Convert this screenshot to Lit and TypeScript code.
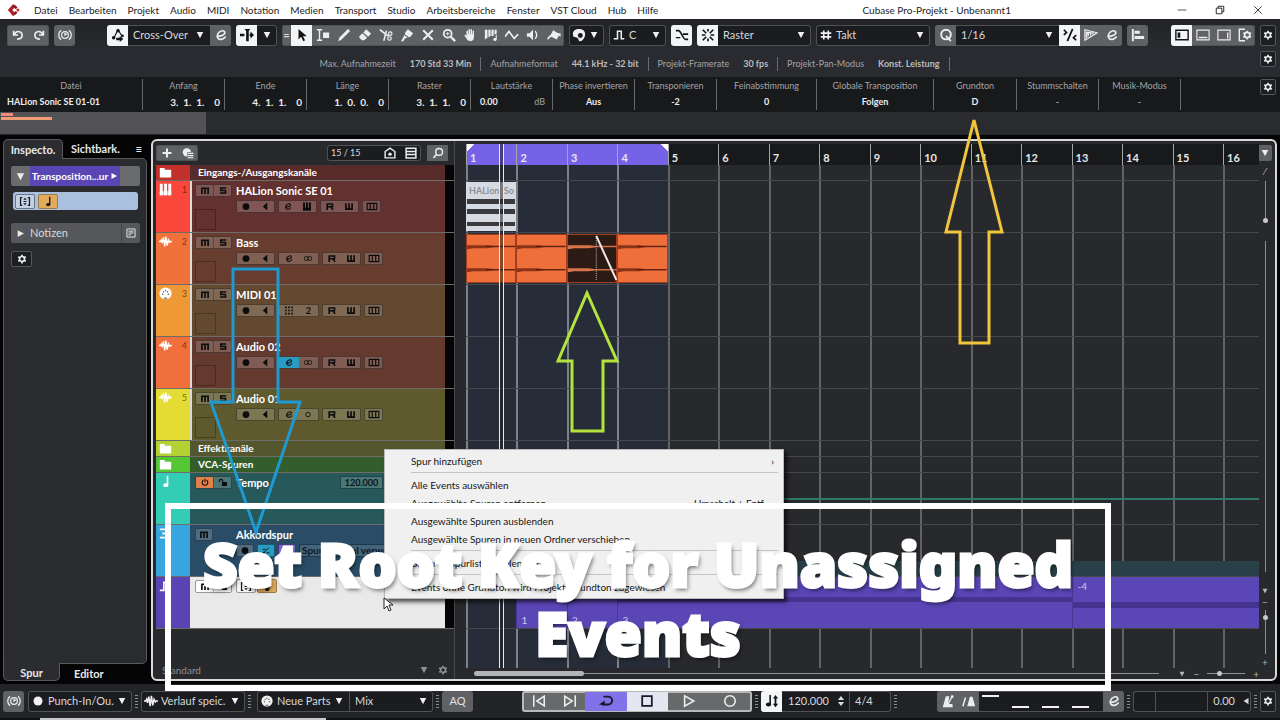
import { LitElement, html, svg, css, nothing } from "lit";
import { customElement, state } from "lit/decorators.js";
import { classMap } from "lit/directives/class-map.js";

const ICONS: Record<string, any> = {
  logo: svg`<path d="M7 1 1 8l6 7 3-3-4-4 4-4z" fill="#b3202c"/><path d="M9 2l3 3-2 2-3-3zM9 14l3-3-2-2-3 3z" fill="#8d1722"/><circle cx="12.500" cy="8" r="1.800" fill="#c8303a"/>`,
  undo: svg`<path d="M3 3v5h5M3.500 8C5 4.500 8 3.500 10.500 4.500c3 1.500 3 6 0 7.500-1 .6-2 .7-3.500.7" fill="none" stroke="currentColor" stroke-width="1.900"/>`,
  redo: svg`<path d="M13 3v5H8M12.500 8C11 4.500 8 3.500 5.500 4.500c-3 1.500-3 6 0 7.500 1 .6 2 .7 3.500.7" fill="none" stroke="currentColor" stroke-width="1.900"/>`,
  history: svg`<circle cx="8" cy="8" r="3.800" fill="none" stroke="currentColor" stroke-width="1.400"/><path d="M8 5.500V8l2-1.500M3.500 2.500a7 7 0 0 0 0 11M12.500 2.500a7 7 0 0 1 0 11" fill="none" stroke="currentColor" stroke-width="1.500"/>`,
  constrain: svg`<path d="M3 12 8 2l5 8" fill="none" stroke="currentColor" stroke-width="1.300"/><circle cx="8" cy="3" r="2"/><circle cx="3" cy="11" r="2"/><circle cx="13" cy="9" r="1.600"/><path d="M6 11h4V9l4 3.500L10 16v-2H6z"/>`,
  e: svg`<path d="M3.500 9.500C8 9.500 13 7.500 12.300 4.800 11.500 2 5.500 3 4 7.500c-1.200 4 1.500 6 4.500 5.500 2-.3 3.300-1.300 4.300-2.700" fill="none" stroke="currentColor" stroke-width="1.900" stroke-linecap="round"/>`,
  autoscroll: svg`<path d="M7 1h3v14H7zM0 6.500h5v3H0zM11 6.500h1V4l4 4-4 4V9.500h-1z"/><path d="M5 1h7L8.500 4.500z"/>`,
  pointer: svg`<path d="M4 1v12l3-3 2.500 5 2-1L9 9.500h4.500z"/>`,
  range: svg`<path d="M1 2h6M1 14h6M4 2v12" stroke="currentColor" stroke-width="1.600" fill="none"/><path d="M8 5h7v6.500H8z"/>`,
  pencil: svg`<path d="M12.500 1 15 3.500 5 13.500 1.500 15 2.500 11z"/>`,
  eraser: svg`<path d="M9.500 1.500 15 6.500 11.500 10 6 5zM5 6l5.500 5L7 14H4.500L1.500 11V9.500z"/>`,
  scissors: svg`<path d="M1 2 11 9.500M5.500 14.500 8.500 3" stroke="currentColor" stroke-width="1.800" fill="none"/><circle cx="12.800" cy="6.500" r="2" fill="none" stroke="currentColor" stroke-width="1.400"/><circle cx="12" cy="12" r="2" fill="none" stroke="currentColor" stroke-width="1.400"/>`,
  glue: svg`<path d="M9 1.500 15 6l-3 4-2 .5L5.500 7 6 5zM5 8l3.500 3-3 1L4 15H1l2-3z"/>`,
  x: svg`<path d="M2.500 2.500 13.500 13.500M13.500 2.500 2.500 13.500" stroke="currentColor" stroke-width="2.400"/>`,
  zoom: svg`<circle cx="6.500" cy="6.500" r="4.500" fill="none" stroke="currentColor" stroke-width="2"/><path d="m10 10 5 5" stroke="currentColor" stroke-width="2.600"/><path d="M4.500 6.500h4M6.500 4.500v4" stroke="currentColor" stroke-width="1"/>`,
  hand: svg`<path d="M4 8V3h1.700v4h.6V1.500H8V7h.6V1.500h1.700V7h.6V3h1.700v7c0 3-1.500 5-4 5-3 0-4-1.500-5-3.500L1.500 8.500C2.500 7 3.500 8.300 4 9z"/>`,
  warp: svg`<path d="M1 2h3v9l-3 2zM5 2h2.500v7L5 10.500zM8.500 2H11v7H8.500zM12 2h2.500v5H12z"/><path d="M14 8v5" stroke="currentColor" stroke-width="1.200"/><circle cx="12.500" cy="13" r="1.800"/>`,
  wave: svg`<path d="M0 10 4.500 4l6 8L15 7" fill="none" stroke="currentColor" stroke-width="1.900"/>`,
  speaker: svg`<path d="M1 6h3l4-4v12l-4-4H1z"/><path d="M10.500 3.500q3.500 4.500 0 9" fill="none" stroke="currentColor" stroke-width="1.600"/>`,
  bucket: svg`<path d="M7 2.500 14.500 7 11 13 3.500 9zM10 6h5.500v4z"/><path d="M1 13c1-3 3-4 5-4" fill="none" stroke="currentColor" stroke-width="1.800"/>`,
  palette: svg`<path d="M8 1c4 0 7 2 7 6s-3 8-6 8c-2 0-1-3-3-4S1 11 1 7s3-6 7-6z"/><circle cx="9.500" cy="8.500" r="2.800" fill="#1a1b1e"/>`,
  pulse: svg`<path d="M1 13h5V3h5v10h4" fill="none" stroke="currentColor" stroke-width="2"/>`,
  cross: svg`<path d="M1 3h3c3 0 5 10 8 10h3M9 7h6" fill="none" stroke="currentColor" stroke-width="1.900"/><path d="M1 11h5" stroke="currentColor" stroke-width="1.500"/>`,
  snap: svg`<path d="M2 2l4 4M14 2l-4 4M2 14l4-4M14 14l-4-4M8 1v3M8 12v3M1 8h4M15 8h-4" fill="none" stroke="currentColor" stroke-width="1.900"/>`,
  hash: svg`<path d="M5 2v12M11 2v12M1 5.500h14M1 10.500h14" stroke="currentColor" stroke-width="2.200"/>`,
  q: svg`<circle cx="8" cy="7.500" r="5.500" fill="none" stroke="currentColor" stroke-width="2.200"/><path d="m8 9 5.500 6" stroke="currentColor" stroke-width="2.200"/>`,
  iq: svg`<path d="M11 1 5 15" stroke="currentColor" stroke-width="2"/><path d="M1 2l3 3-3 3M15 8l-3 3 3 3" fill="none" stroke="currentColor" stroke-width="2"/>`,
  warpq: svg`<path d="M1 2v12l14-8.500z" fill="none" stroke="currentColor" stroke-width="1.300"/><path d="M2 4v8l2-1.500V6l1 4 1.500-5 1 5L9 5l1 3 1.500-3z"/>`,
  align: svg`<path d="M1 1h2.200v14H1zM4 3h6v3.500H4zM4 9h11v3.500H4z"/>`,
  zl: svg`<path d="M1 2.500h14v11H1z" fill="none" stroke="currentColor" stroke-width="1.600"/><path d="M3 5h3v6H3z"/>`,
  zb: svg`<path d="M1 2.500h14v11H1z" fill="none" stroke="currentColor" stroke-width="1.300"/><path d="M3 10h10v1.600H3z"/>`,
  zr: svg`<path d="M1 2.500h14v11H1z" fill="none" stroke="currentColor" stroke-width="1.300"/><path d="M11.500 5H13v7h-1.500z"/>`,
  zs: svg`<path d="M8 1.500H1.500v13H8" fill="none" stroke="currentColor" stroke-width="1.600"/><circle cx="10.500" cy="8" r="3" fill="none" stroke="currentColor" stroke-width="2"/><path d="M10.500 3v2M10.500 11v2M6 5.500l2 1M15 5.500l-2 1M6 10.500l2-1M15 10.500l-2-1" stroke="currentColor" stroke-width="1.700"/>`,
  gear: svg`<circle cx="8" cy="8" r="4" fill="none" stroke="currentColor" stroke-width="2.600"/><path d="M8 1v3M8 12v3M2 4.500l2.500 1.500M14 4.500 11.500 6M2 11.500 4.500 10M14 11.500 11.500 10" stroke="currentColor" stroke-width="2.700"/>`,
  down: svg`<path d="M1.500 2h13L8 14.500z"/>`,
  right: svg`<path d="M3 2v12l11-6z"/>`,
  left: svg`<path d="M12 3v10L4 8z"/>`,
  plus: svg`<path d="M8 2v12M2 8h12" stroke="currentColor" stroke-width="2.800"/>`,
  preset: svg`<circle cx="6.500" cy="7" r="5.500"/><path d="M7 8h9M7 11h9M7 14h9" stroke="#6b6c6f" stroke-width="3"/><path d="M7.500 8.500H15M7.500 11.500H15M7.500 14.300H15" stroke="currentColor" stroke-width="1.400"/>`,
  house: svg`<path d="M1.500 14.500V6L8 1.500 14.500 6v8.500z" fill="none" stroke="currentColor" stroke-width="1.900"/><circle cx="8" cy="9.500" r="2.300"/>`,
  list: svg`<path d="M1.500 1.500h13v13h-13zM1.500 6h13M1.500 10h13" fill="none" stroke="currentColor" stroke-width="2"/>`,
  search: svg`<circle cx="9.500" cy="6.500" r="4.500" fill="none" stroke="currentColor" stroke-width="1.900"/><path d="M6 10 2 14.500" stroke="currentColor" stroke-width="2.200"/>`,
  folder: svg`<path d="M1 2.500h6v2h8v9.500H1z"/>`,
  keys: svg`<path d="M1 1h3.500v14H1zM6.300 1h3.500v14H6.300zM11.500 1H15v14h-3.500z"/><path d="M1 10h14v5H1z"/><path d="M5.400 10v5M10.600 10v5" stroke="#000" stroke-opacity=".4" stroke-width=".8"/>`,
  audio: svg`<path d="M0 8h2l1-2 1 4 1.500-7L7 14 8.500 2 10 13l1.500-7L13 9l1-1h2" fill="none" stroke="currentColor" stroke-width="1.700"/>`,
  midi: svg`<circle cx="8" cy="8" r="7.500"/><path d="M4.500 9v.1M11.500 9v.1M5.500 5.800v.1M10.500 5.800v.1M8 4.300v.1" stroke="#333" stroke-opacity=".8" stroke-width="1.700" stroke-linecap="round"/><path d="M6 15h4v-2H6z" fill="#333" fill-opacity=".6"/>`,
  note: svg`<path d="M9.500 1h2v11h-2z"/><ellipse cx="8.300" cy="12.500" rx="3.200" ry="2.300"/>`,
  chord: svg`<path d="M1 3h12M4 8h10M1 13h13" stroke="currentColor" stroke-width="2.200"/>`,
  step: svg`<path d="M1 14h5V4h6M12 1v6" fill="none" stroke="currentColor" stroke-width="2"/>`,
  dot: svg`<circle cx="8" cy="8" r="6"/>`,
  spk: svg`<path d="M12 1v14L4 8z"/>`,
  m: svg`<path d="M2.500 14V4H13.500V14M8 4v10" fill="none" stroke="currentColor" stroke-width="3"/>`,
  s: svg`<path d="M13.500 3.500H4V8h8.500v4.500H2.500" fill="none" stroke="currentColor" stroke-width="2.800"/>`,
  r: svg`<path d="M3 14V3.500h9.500v5H4M9 8.500l4.500 5.500" fill="none" stroke="currentColor" stroke-width="2.800"/>`,
  w: svg`<path d="M2.500 2v10.500h11V2M8 2v10" fill="none" stroke="currentColor" stroke-width="3"/>`,
  stereo: svg`<circle cx="5" cy="8" r="3.700" fill="none" stroke="currentColor" stroke-width="1.400"/><circle cx="11" cy="8" r="3.700" fill="none" stroke="currentColor" stroke-width="1.400"/>`,
  mono: svg`<circle cx="8" cy="8" r="4" fill="none" stroke="currentColor" stroke-width="1.600"/>`,
  grid: svg`<path d="M1 1h3v3H1zM6.500 1h3v3h-3zM12 1h3v3h-3zM1 6.500h3v3H1zM6.500 6.500h3v3h-3zM12 6.500h3v3h-3zM1 12h3v3H1zM6.500 12h3v3h-3zM12 12h3v3h-3z"/>`,
  lanes: svg`<path d="M1 3.500h14v9H1zM5.500 4v8M10.500 4v8" fill="none" stroke="currentColor" stroke-width="1.700"/>`,
  power: svg`<path d="M5 4a5 5 0 1 0 6 0M8 1.500v6" fill="none" stroke="currentColor" stroke-width="1.900"/>`,
  lock: svg`<path d="M6 7h9v7H6z"/><path d="M1.500 7V5q0-2.500 3-2.500t3 2.500v3" fill="none" stroke="currentColor" stroke-width="1.900"/>`,
  bracket: svg`<path d="M4 2.500H1.500v11H4M12 2.500h2.500v11H12" fill="none" stroke="currentColor" stroke-width="1.800"/><path d="M8 2.500l2.500 3h-5zM8 13.500l2.500-3h-5zM6 7.300h4v1.400H6z"/>`,
  pad: svg`<path d="M1.500 1.500h13v13h-13zM4 5h8M4 8h8M4 11h4" fill="none" stroke="currentColor" stroke-width="1.500"/>`,
  chordtool: svg`<path d="M3 13 13 3M2 6h5M9 12h5" stroke="currentColor" stroke-width="1.600"/><circle cx="4" cy="12" r="2"/>`,
  prev: svg`<path d="M2 1.500v13M14 2.500v11L5.500 8z" fill="none" stroke="currentColor" stroke-width="1.800"/>`,
  next: svg`<path d="M14 1.500v13M2 2.500v11L10.500 8z" fill="none" stroke="currentColor" stroke-width="1.800"/>`,
  cycle: svg`<path d="M5 3h5.500a4.300 4.300 0 0 1 0 9H4" fill="none" stroke="currentColor" stroke-width="2.100"/><path d="M0 12l6.500-4.500V13z"/>`,
  stop: svg`<path d="M2.500 2.500h11v11h-11z" fill="none" stroke="currentColor" stroke-width="2"/>`,
  play: svg`<path d="M3 2v12l10.500-6z" fill="none" stroke="currentColor" stroke-width="1.800"/>`,
  rec: svg`<circle cx="8" cy="8" r="6" fill="none" stroke="currentColor" stroke-width="1.800"/>`,
  tempo: svg`<path d="M5 1h1.800v11H5zM12 1l3 4h-2v6h2l-3 4-3-4h2V5H9z"/><ellipse cx="4" cy="12" rx="3" ry="2.300"/>`,
  spin: svg`<path d="M8 0 13 6.500H3zM8 16l5-6.500H3z"/>`,
  metro: svg`<path d="M5.500 2.500h4l-1.500 9h5l.5 3.500H2z"/><path d="M8 12 13 2" stroke="currentColor" stroke-width="1.600"/><circle cx="12.800" cy="3" r="1.600"/>`,
  count: svg`<path d="M4 4 1 14" stroke="currentColor" stroke-width="1.700"/><path d="M9 3h3l3 11H6z"/>`,
  min: svg`<path d="M1 8h14" stroke="currentColor" stroke-width="1.200"/>`,
  max: svg`<path d="M2 5h9v9H2zM5 5V2h9v9h-3" fill="none" stroke="currentColor" stroke-width="1.500"/>`,
  close: svg`<path d="M2 2l12 12M14 2 2 14" stroke="currentColor" stroke-width="1.400"/>`,
};

const ico = (name: string, size = "") =>
  html`<svg class="i ${size}" viewBox="0 0 16 16" fill="currentColor" aria-hidden="true">${ICONS[name]}</svg>`;

const btn = (icon: string, label: string, cls = "") =>
  html`<button class="b ${cls}" aria-label=${label}>${ico(icon)}</button>`;

const combo = (text: string, label: string, cls = "") =>
  html`<label class="combo ${cls}"><select aria-label=${label}><option>${text}</option></select>${ico("down", "xs")}</label>`;

interface Track {
  id: string;
  name: string;
  icon: string;
  num?: string;
  kind: "folder" | "track" | "tempo" | "chord" | "transpose";
  extra?: string;
}

const TRACKS: Track[] = [
  { id: "io", name: "Eingangs-/Ausgangskanäle", icon: "folder", kind: "folder" },
  { id: "halion", name: "HALion Sonic SE 01", icon: "keys", num: "1", kind: "track", extra: "keys" },
  { id: "bass", name: "Bass", icon: "audio", num: "2", kind: "track", extra: "stereo" },
  { id: "midi", name: "MIDI 01", icon: "midi", num: "3", kind: "track", extra: "midi" },
  { id: "audio2", name: "Audio 02", icon: "audio", num: "4", kind: "track", extra: "stereo" },
  { id: "audio1", name: "Audio 01", icon: "audio", num: "5", kind: "track", extra: "mono" },
  { id: "fx", name: "Effektkanäle", icon: "folder", kind: "folder" },
  { id: "vca", name: "VCA-Spuren", icon: "folder", kind: "folder" },
  { id: "tempo", name: "Tempo", icon: "note", kind: "tempo" },
  { id: "chords", name: "Akkordspur", icon: "chord", kind: "chord" },
  { id: "transpose", name: "", icon: "step", kind: "transpose" },
];

const INFO: [string, string, string][] = [
  ["Datei", "HALion Sonic SE 01-01", "file"],
  ["Anfang", "3.  1.  1.    0", "time"],
  ["Ende", "4.  1.  1.    0", "time"],
  ["Länge", "1.  0.  0.    0", "time"],
  ["Raster", "3.  1.  1.    0", "time"],
  ["Lautstärke", "0.00", "vol"],
  ["Phase invertieren", "Aus", ""],
  ["Transponieren", "-2", ""],
  ["Feinabstimmung", "0", ""],
  ["Globale Transposition", "Folgen", ""],
  ["Grundton", "D", ""],
  ["Stummschalten", "-", "dim"],
  ["Musik-Modus", "-", "dim"],
];

const BARS = Array.from({ length: 16 }, (_, i) => i + 1);

@customElement("app-root")
export class AppRoot extends LitElement {
  @state() private selectedTool = "pointer";

  static styles = css`
    :host {
      display: flex;
      flex-direction: column;
      min-height: 100vh;
      position: relative;
      overflow: hidden;
      background: #050506;
      color: #d8d9db;
      font: 10px/14px Lato, "Open Sans", sans-serif;
    }
    * { box-sizing: border-box; }
    button, select, input {
      font: inherit;
      color: inherit;
      background: none;
      border: 0;
      padding: 0;
      margin: 0;
      border-radius: 0;
      min-width: 0;
    }
    a { color: inherit; text-decoration: none; }
    select { appearance: none; }
    .i { width: 14px; height: 14px; display: block; flex: none; }
    .i.xs { width: 8px; height: 8px; }
    .i.sm { width: 10px; height: 10px; }
    .i.md { width: 12px; height: 12px; }

    /* menu bar */
    .menubar {
      display: flex;
      align-items: center;
      height: 19px;
      background: #fff;
      color: #1c1c1c;
      padding: 0 15px 0 7px;
    }
    .menubar nav { display: flex; gap: 11px; margin-left: 13px; }
    .title { margin-left: auto; }
    .winctl { display: flex; gap: 24px; margin-left: 164px; }
    .winctl .i { width: 10px; height: 10px; }
    .menubar .winctl .b { width: 14px; height: 14px; color: #222; }

    /* generic toolbar pieces */
    .toolbar {
      display: flex;
      align-items: center;
      gap: 5px;
      height: 32px;
      padding: 0 4px 0 7px;
      background: linear-gradient(#222326, #2a2b30);
      font-size: 11px;
    }
    .grp {
      display: flex;
      height: 21px;
      border-radius: 3px;
      background: #1b1c1f;
      box-shadow: inset 0 0 0 1px #505155;
      overflow: hidden;
      flex: none;
    }
    .b {
      display: flex;
      align-items: center;
      justify-content: center;
      width: 21px;
      color: #eceded;
      flex: none;
    }
    .b.grey, .grp.grey { background: #606164; }
    .b.on { background: #f3f4f6; color: #121316; }
    .b.box {
      width: 16px;
      height: 16px;
      border: 1px solid #55565a;
      border-radius: 2px;
      background: #1d1e21;
    }
    .b.box .i { width: 10px; height: 10px; }
    .b.tall { height: 21px; }
    .b.rounded { border-radius: 3px; height: 21px; }
    .combo {
      display: grid;
      grid-template-columns: 1fr auto;
      align-items: center;
      padding: 0 6px 0 5px;
      flex: 1;
    }
    .lead + .combo { padding-left: 0; }
    .combo select { grid-area: 1 / 1 / 2 / 3; height: 100%; width: 100%; text-align: left; }
    .combo option { color: #000; }
    .combo .i { grid-area: 1 / 2; pointer-events: none; color: #f0f0f0; }
    .indent { margin-left: 27px; }
    .w-mode { width: 124px; }
    .w-auto { width: 41px; }
    .w-pal { width: 35px; }
    .w-curve { width: 57px; }
    .w-snap { width: 114px; }
    .w-quant { width: 187px; }
    .w-auto .combo { padding-left: 0; }
    .handle { width: 9px; display: grid; place-items: center; font-weight: 700; }
    .push { margin-left: auto; }

    .status {
      display: grid;
      grid-template-columns: 16px 1fr 16px;
      height: 26px;
      padding: 0 4px;
      background: #2a2b30;
      color: #a3a4a7;
      font-size: 9px;
    }
    .status ul {
      display: flex;
      justify-content: center;
      align-items: center;
      list-style: none;
      margin: 0;
      padding: 0 20px 0 0;
    }
    .status li { display: flex; gap: 14px; padding: 0 9px; border-right: 1px solid #6a6b6e; }
    .status strong { color: #bbbcbf; }

    .info {
      display: grid;
      grid-template-columns: 143px repeat(4, 82px) repeat(2, 82px) 82px 100px 117px 83px repeat(2, 82px) 1fr;
      height: 35px;
      background: #18191b;
      padding: 2px 4px 2px 0;
      font-size: 9px;
    }
    .cell {
      display: flex;
      flex-direction: column;
      align-items: center;
      gap: 2px;
      border-right: 1px solid #68696c;
      color: #a3a4a7;
    }
    .cell strong { color: #ececed; white-space: pre; }
    .cell.file strong { align-self: flex-start; padding-left: 7px; }
    .cell.time strong { align-self: flex-end; padding-right: 4px; font-size: 10px; }
    .cell .pair { display: flex; justify-content: space-between; align-self: stretch; padding: 0 7px 0 9px; }
    .cell.dim strong { color: #a0a0a3; }
    .info .b { justify-self: end; }

    .overview { height: 23px; background: #2a2b2f; border-bottom: 1px solid #232427; }
    .view { width: 206px; height: 22px; background: #525254; padding: 1px; }
    .mini-a { width: 12px; height: 3px; background: #f58a7c; }
    .mini-b { width: 51px; height: 3px; background: #f29c76; margin-top: 1px; }

    /* work area */
    .work { display: flex; flex: 1; gap: 4px; padding: 4px 3px 3px 3px; min-height: 0; }
    .inspector { width: 144px; display: flex; flex-direction: column; flex: none; font-size: 11px; font-weight: 700; }
    .tabs { display: flex; align-items: center; color: #e8e8e9; }
    .tabs button { height: 20px; }
    .tabs .sel { width: 60px; background: #2b2c30; border: 1px solid #58595c; z-index: 1; }
    .tabs.top .sel { border-bottom: 0; border-radius: 5px 5px 0 0; }
    .tabs.bottom button { height: 18px; padding-top: 3px; }
    .tabs.bottom .sel { border-top: 0; border-radius: 0 0 5px 5px; width: 57px; }
    .tabs .other { margin-left: 8px; }
    .tabs.bottom .other { margin-left: 14px; }
    .tabs .menu { margin-left: auto; margin-right: 5px; }
    .panel {
      flex: 1;
      background: #2a2b2f;
      border: 1px solid #58595c;
      border-radius: 0 5px 5px 0;
      margin: -1px 0;
      padding: 7px 6px 0 7px;
    }
    .sect { display: flex; align-items: center; height: 20px; border-radius: 2px; background: #6a6b6d; overflow: hidden; }
    .sect .b { width: 19px; }
    .sect .b .i { width: 9px; height: 9px; }
    .sect .name { background: #5a45b4; height: 100%; width: 90px; display: flex; align-items: center; justify-content: center; gap: 2px; font-size: 10px; color: #fff; }
    .notes { background: #56575a; margin-top: 13px; font-weight: 400; }
    .notes .end { margin-left: auto; border-left: 1px solid #444; height: 100%; }
    .notes .end .i { width: 10px; height: 10px; }
    .bluebar { display: flex; gap: 3px; align-items: center; height: 18px; margin: 6px 2px 0 2px; padding: 0 2px; border-radius: 3px; background: #a9c1de; }
    .chips { display: flex; gap: 1px; }
    .chip { width: 20px; height: 15px; border: 1px solid #6a7686; border-radius: 2px; background: #c3d1e4; color: #1a1a1a; display: grid; place-items: center; flex: none; }
    .chip .i { width: 12px; height: 11px; }
    .bright .chip { background: #f6f6f6; border-color: #999; height: 14px; }
    .chip.gold, .bright .chip.gold { background: #e2ab5a; border-color: #9c7b4a; }
    .panel > .b.box { width: 21px; margin-top: 8px; }

    .project {
      flex: 1;
      min-width: 0;
      display: flex;
      border: 2px solid #d8d9da;
      border-radius: 6px;
      background: #28292c;
      padding-left: 3px;
    }
    .tracklist { width: 299px; display: flex; flex-direction: column; border-right: 1px solid #48494c; flex: none; }
    .tl-head { display: flex; align-items: center; height: 24px; padding-right: 6px; gap: 6px; }
    .tl-head .grp { height: 16px; }
    .tl-head .b .i { width: 12px; height: 12px; }
    .tl-head .b { height: 16px; }
    .count { display: flex; align-items: center; width: 52px; padding-left: 4px; font-size: 9px; }
    .row { height: 16px; display: flex; background: #050506; border-bottom: 1px solid #6e6b68; overflow: hidden; }
    .row.full { height: 52px; }
    .color { width: 34px; flex: none; display: flex; justify-content: space-between; padding: 1px 3px 0 2px; color: #fff; font-size: 9px; background: var(--c); }
    .row.full .color { padding-top: 2px; }
    .color span { color: #0008; }
    .color .i { width: 15px; height: 13px; }
    .body { flex: 1; min-width: 0; margin-right: 9px; background: var(--d); display: flex; gap: 4px; padding: 2px 0 0 3px; color: #fff; font-weight: 700; border-left: 2px solid var(--d); }
    .num .body { border-left-color: #dcdad8; }
    .folder .body { padding: 0 0 0 6px; font-size: 10px; line-height: 15px; }
    .io { --c: #c2302b; --d: #582b2b; }
    .halion { --c: #fa473b; --d: #63312f; }
    .bass { --c: #f07139; --d: #663d2f; }
    .midi { --c: #ee9836; --d: #63492f; }
    .audio2 { --c: #f06f3a; --d: #643a2f; }
    .audio1 { --c: #e4dc35; --d: #5f592e; }
    .fx { --c: #b2d234; --d: #54572e; }
    .vca { --c: #54c832; --d: #345d2c; }
    .tempo { --c: #33cdb5; --d: #27585a; }
    .chords { --c: #37a5de; --d: #294d67; }
    .transpose { --c: #5a44b4; --d: #e9e9e9; }
    .ms { width: 37px; flex: none; display: flex; flex-direction: column; gap: 12px; padding-top: 1px; }
    .pill { display: flex; height: 13px; border: 1px solid #0006; border-radius: 2px; background: #ffffff2e; color: #111; overflow: hidden; flex: none; }
    .pill .b { flex: 1; color: #0c0c0c; width: auto; }
    .pill .b .i { width: 10px; height: 9px; }
    .pill .b + .b { border-left: 1px solid #0004; }
    .pill.soft .b + .b { border-left: 0; }
    .slot { width: 21px; height: 21px; border: 1px solid #0004; }
    .main { flex: 1; min-width: 0; }
    .tname { font-size: 11px; line-height: 15px; display: flex; justify-content: space-between; align-items: center; height: 15px; }
    .ctrls { display: flex; gap: 3px; margin-top: 2px; }
    .pill.p2 { width: 39px; }
    .pill.p3 { width: 41px; }
    .pill.p1 { width: 19px; }
    .pill.p1 .i { width: 14px; height: 11px; }
    .pill .blue { background: #2a9cc2; }
    .pill .org { background: #e2804a; }
    .pill .num2 { flex: 1; font-size: 9px; line-height: 11px; text-align: center; }
    .bpm { width: 43px; height: 13px; margin-right: 62px; background: #4a7678; color: #0c1414; text-align: center; font: 700 9px/11px Lato, sans-serif; border: 1px solid #1d4446; }
    .bright .pill { background: #fff; border-color: #999; }
    .usage { flex: 1; border: 1px solid #1c384a; border-radius: 2px; height: 13px; font-size: 10px; line-height: 11px; padding-left: 2px; color: #0c1820; background: #ffffff20; white-space: nowrap; overflow: hidden; }
    .pill.violet { background: #7767cf; }
    .pill.cyan { background: #2a9cc2; }
    .pill.one { width: 18px; }
    .tl-foot { margin-top: auto; display: flex; align-items: center; height: 18px; padding: 0 6px 0 6px; gap: 10px; color: #8f9093; }
    .tl-foot .combo { padding: 0; }
    .tl-foot .combo .i { color: #8f9093; }

    /* arrangement */
    .arr { flex: 1; min-width: 0; display: flex; flex-direction: column; padding-left: 11px; }
    .canvas { flex: 1; position: relative; margin-top: 3px; display: flex; flex-direction: column; }
    .barsgrid { display: grid; grid-template-columns: repeat(15, 101fr) 72fr; }
    .ruler { height: 21px; background: #18191b; color: #e6e6e8; font-weight: 700; font-size: 11px; position: relative; }
    .ruler span { padding: 7px 0 0 3px; border-left: 1px solid #a5a6a9; line-height: 14px; overflow: hidden; }
    .ruler .loop { background: #7562e6; }
    .ruler .first { background: linear-gradient(135deg, #fff 5px, #7562e6 5px); }
    .ruler .last { background: linear-gradient(225deg, #fff 5px, #7562e6 5px); }
    .lines { position: absolute; inset: 21px 0 0 0; }
    .lines i { border-left: 2px solid #626366; }
    .lines .loop { background: #262d38; border-left-color: #7d828a; }
    .lanes { position: relative; }
    .lane { height: 16px; border-bottom: 1px solid #47484b; }
    .lane.full { height: 52px; }
    .ev { position: relative; margin: 1px 0; overflow: hidden; }
    .ev.part { background: linear-gradient(#d6dae3 0 16px, #3b3b3f 16px 21px, #d6dae3 21px 26px, #3b3b3f 26px 31px, #d6dae3 31px 39px, #3b3b3f 39px 43px, #d6dae3 43px); color: #8e8f94; font-weight: 700; font-size: 9px; padding: 1px 0 0 2px; white-space: nowrap; border: 1px solid #d6dae3; }
    .ev.clip { background: #ef6f3a; box-shadow: inset 0 0 0 1px #a33d20; }
    .ev.dark { background: #2c1a14; }
    .ev svg { display: block; width: 100%; height: 100%; }
    .tempoline { grid-column: 1 / -1; align-self: center; height: 2px; background: #2d7a6b; }
    .chordband { grid-column: 1 / -1; align-self: end; height: 15px; background: #294049; }
    .ev.tr { background-color: #5b46b6; box-shadow: inset 1px 0 0 #483692; margin: 0; color: #cfc8f0; }
    .low { display: flex; align-items: flex-end; padding: 0 0 1px 5px; }
    .wide { display: flex; align-items: flex-end; padding: 0 0 1px 5px; background-image: linear-gradient(#44348f, #44348f); background-size: 100% 5px; background-position: 0 20px; background-repeat: no-repeat; }
    .high { padding: 2px 0 0 6px; background-image: linear-gradient(#44348f, #44348f); background-size: 100% 6px; background-position: 0 25px; background-repeat: no-repeat; }
    .s1 { grid-column: 1; } .s2 { grid-column: 2; } .s3 { grid-column: 3; } .s4 { grid-column: 4; }
    .s4w { grid-column: 4 / 13; } .s13w { grid-column: 13 / 17; }
    .playhead { position: absolute; left: 33px; top: 0; bottom: 0; width: 5px; border: 1px solid #e8e8ea; border-width: 0 1px 0 1px; background: #2228; }
    .hscroll { display: flex; align-items: center; gap: 8px; height: 11px; padding-left: 8px; color: #b5b6b9; font-size: 10px; }
    .track-line { flex: 1; height: 1px; background: #8e8f92; display: flex; align-items: center; margin-right: 12px; }
    .thumb { width: 110px; height: 5px; border-radius: 3px; background: #b3b4b6; flex: none; }
    .range { appearance: none; width: 38px; height: 8px; background: linear-gradient(#8e8f92, #8e8f92) center / 100% 1px no-repeat; }
    .range::-webkit-slider-thumb { appearance: none; width: 5px; height: 5px; border-radius: 50%; background: #c8c9cb; }
    .range.v { width: 5px; writing-mode: vertical-lr; background: linear-gradient(#8e8f92, #8e8f92) center / 1px 100% no-repeat; }
    .v1 { height: 42px; }
    .v3 { height: 44px; }
    .side { width: 16px; flex: none; display: flex; flex-direction: column; align-items: center; gap: 4px; padding: 4px 4px 13px 0; color: #b5b6b9; line-height: 8px; }
    .side .b { width: 14px; height: 16px; border-radius: 2px; background: #5f6062; }
    .side .b .i { width: 8px; height: 8px; }
    .side > .i.xs, .hscroll .i.xs { width: 6px; height: 6px; }
    .slash { padding: 2px 0; }
    .vline { flex: 1; width: 1px; background: #8e8f92; margin-top: 14px; margin-bottom: 12px; }

    /* transport */
    .transport { display: flex; align-items: center; height: 34px; padding: 0 4px 0 3px; background: #232427; font-size: 11px; }
    .dots { width: 3px; height: 13px; margin: 0 3px; background: repeating-linear-gradient(#8c8d90 0 1px, transparent 1px 3px); flex: none; }
    .lead { display: grid; place-items: center; width: 20px; color: #f0f0f0; flex: none; }
    .w-punch { width: 104px; margin-left: 4px; }
    .w-hist { width: 104px; }
    .w-parts { width: 176px; margin-left: 3px; }
    .w-parts .combo + .combo { border-left: 1px solid #505155; flex: none; width: 84px; }
    .aq { width: 31px; height: 21px; border-radius: 3px; background: #606164; color: #e0e0e2; }
    .play { width: 230px; margin-left: 49px; box-shadow: inset 0 0 0 2px #b8b9bb; background: #68696b; padding: 1px; }
    .play .b { flex: 4; }
    .play .half { flex: 3; }
    .play .cyc { background: #8172ea; color: #18182a; }
    .play .stp { background: #e4e6f2; color: #18182a; }
    .w-tempo { width: 130px; }
    .w-tempo input { flex: 1; width: 40px; text-align: right; padding-right: 4px; }
    .w-tempo .spin { width: 16px; display: grid; place-items: center; }
    .w-tempo .sig { width: 42px; border-left: 1px solid #505155; text-align: left; padding-left: 5px; flex: none; }
    .w-metro { width: 187px; }
    .beats { flex: 1; display: flex; gap: 13px; align-items: flex-end; padding: 4px 0 4px 3px; }
    .beats i { width: 17px; height: 2px; background: #f2f2f2; }
    .beats .up { align-self: flex-start; }
    .w-level { width: 118px; }
    .w-level > * { border-left: 1px solid #505155; }
    .w-level i { width: 22px; } .w-level i + i { width: 52px; }
    .w-level label { flex: 1; display: flex; align-items: center; }
    .w-level input { width: 28px; flex: 1; text-align: right; padding-right: 6px; }
    .taskbar { height: 2px; background: #101113; padding-left: 40px; }
    .taskbar i { display: block; width: 286px; height: 2px; background: #c9c9c9; }

    /* floating layers */
    .ctx {
      position: absolute;
      left: 384px;
      top: 449px;
      width: 400px;
      padding: 2px 5px 2px 26px;
      background: #f0f0f0;
      border: 1px solid #b9b9b9;
      box-shadow: 3px 3px 4px #000a;
      color: #161616;
    }
    .ctx button { display: flex; justify-content: space-between; width: 100%; height: 18px; align-items: center; padding-right: 14px; line-height: 18px; }
    .ctx .sub { padding-right: 4px; }
    .ctx hr { margin: 2px 0 3px 0; border: 0; border-top: 1px solid #c4c4c4; }
    .caption {
      position: absolute;
      left: 165px;
      right: 169px;
      top: 503px;
      height: 188px;
      border: 6px solid #fff;
      margin: 0;
      padding-top: 21px;
      text-align: center;
      color: #fff;
      font: 900 60px/69px "Noto Sans", "Open Sans", sans-serif;
      -webkit-text-stroke: 3px #fff;
      text-shadow: 2px 3px 4px #0008;
    }
    .marks { position: absolute; left: 0; top: 0; width: 1280px; height: 720px; pointer-events: none; }
  `;

  private menubar() {
    const items = ["Datei", "Bearbeiten", "Projekt", "Audio", "MIDI", "Notation", "Medien", "Transport", "Studio", "Arbeitsbereiche", "Fenster", "VST Cloud", "Hub", "Hilfe"];
    return html`<header class="menubar">
      ${ico("logo")}
      <nav>${items.map((t) => html`<a href="#">${t}</a>`)}</nav>
      <span class="title">Cubase Pro-Projekt - Unbenannt1</span>
      <div class="winctl">${btn("min", "Minimieren")}${btn("max", "Wiederherstellen")}${btn("close", "Schließen")}</div>
    </header>`;
  }

  private toolbar() {
    const tools = ["pointer", "range", "pencil", "eraser", "scissors", "glue", "x", "zoom", "hand", "warp", "wave", "speaker", "bucket"];
    return html`<div class="toolbar">
      <div class="grp grey">${btn("undo", "Rückgängig")}${btn("redo", "Wiederholen")}</div>
      ${btn("history", "Verlauf", "grey rounded")}
      <div class="grp w-mode indent">${btn("constrain", "Automation", "on")}${combo("Cross-Over", "Automationsmodus")}${btn("e", "Automation bearbeiten", "grey")}</div>
      <div class="grp w-auto">${btn("autoscroll", "Autoscroll", "on")}${combo("", "Autoscroll-Modus")}</div>
      <div class="grp grey">
        <span class="handle">=</span>
        ${tools.map((t) => html`<button class=${classMap({ b: true, on: this.selectedTool === t })} aria-label=${t} @click=${() => (this.selectedTool = t)}>${ico(t)}</button>`)}
      </div>
      <div class="grp w-pal"><span class="lead">${ico("palette")}</span>${combo("", "Farbe")}</div>
      <div class="grp w-curve"><span class="lead">${ico("pulse", "md")}</span>${combo("C", "Kurventyp")}</div>
      ${btn("cross", "Nulldurchgänge", "on rounded")}
      <div class="grp w-snap">${btn("snap", "Raster ein", "on")}${combo("Raster", "Rastermodus")}</div>
      <div class="grp w-snap"><span class="lead">${ico("hash", "md")}</span>${combo("Takt", "Rastertyp")}</div>
      <div class="grp w-quant">${btn("q", "Quantisieren", "grey")}${combo("1/16", "Quantisierung")}${btn("iq", "iQ", "on")}${btn("warpq", "Audio-Warp", "grey")}${btn("e", "Quantisierung öffnen", "grey")}</div>
      ${btn("align", "Ausrichten", "grey rounded")}
      <div class="grp grey push">${btn("zl", "Linke Zone", "on")}${btn("zb", "Untere Zone")}${btn("zr", "Rechte Zone")}${btn("zs", "Fensterlayout")}</div>
      ${btn("gear", "Einstellungen", "box tall")}
    </div>`;
  }

  private status() {
    const items = [["Max. Aufnahmezeit", "170 Std 33 Min"], ["Aufnahmeformat", "44.1 kHz - 32 bit"], ["Projekt-Framerate", "30 fps"], ["Projekt-Pan-Modus", "Konst. Leistung"]];
    return html`<div class="status"><span></span>
      <ul>${items.map(([k, v]) => html`<li><span>${k}</span><strong>${v}</strong></li>`)}</ul>
      ${btn("gear", "Statuszeile einrichten", "box")}
    </div>
    <div class="info">
      ${INFO.map(([k, v, c]) => html`<div class="cell ${c}"><span>${k}</span>${c === "vol" ? html`<span class="pair"><strong>${v}</strong><span>dB</span></span>` : html`<strong>${v}</strong>`}</div>`)}
      ${btn("gear", "Infozeile einrichten", "box")}
    </div>
    <div class="overview"><div class="view"><div class="mini-a"></div><div class="mini-b"></div></div></div>`;
  }

  private chips() {
    return html`<button class="chip" aria-label="Bereich">${ico("bracket")}</button><button class="chip gold" aria-label="Noten">${ico("note")}</button>`;
  }

  private inspector() {
    return html`<aside class="inspector">
      <div class="tabs top"><button class="sel">Inspecto.</button><button class="other">Sichtbark.</button><button class="menu" aria-label="Menü">≡</button></div>
      <div class="panel">
        <div class="sect">${btn("down", "Aufklappen")}<span class="name">Transposition...ur ${ico("right", "xs")}</span></div>
        <div class="bluebar">${this.chips()}</div>
        <div class="sect notes">${btn("right", "Notizen öffnen")}<span>Notizen</span>${btn("pad", "Notizblock", "end")}</div>
        ${btn("gear", "Inspector einrichten", "box")}
      </div>
      <div class="tabs bottom"><button class="sel">Spur</button><button class="other">Editor</button></div>
    </aside>`;
  }

  private trackBody(t: Track) {
    if (t.kind === "folder") return html`<div class="body">${t.name}</div>`;
    if (t.kind === "tempo")
      return html`<div class="body"><div class="ms"><div class="pill">${btn("power", "Tempo aktivieren", "org")}${btn("lock", "Sperren")}</div></div>
        <div class="main"><div class="tname"><span>${t.name}</span><input class="bpm" aria-label="Tempo" value="120.000" /></div></div></div>`;
    if (t.kind === "chord")
      return html`<div class="body"><div class="ms"><div class="pill one">${btn("m", "Stumm")}</div></div>
        <div class="main"><div class="tname">${t.name}</div>
        <div class="ctrls"><div class="pill one">${btn("dot", "Aufnahme")}</div><div class="pill one cyan">${btn("chordtool", "Akkorde anpassen")}</div><div class="pill one violet">${btn("lanes", "Voicing")}</div><span class="usage">Spurauswahl verwenden</span></div></div></div>`;
    if (t.kind === "transpose")
      return html`<div class="body bright"><div class="ms"><div class="pill">${btn("m", "Stumm")}${btn("lock", "Sperren")}</div></div>
        <div class="chips">${this.chips()}</div></div>`;
    return html`<div class="body">
      <div class="ms"><div class="pill">${btn("m", "Stumm")}${btn("s", "Solo")}</div><div class="slot"></div></div>
      <div class="main"><div class="tname">${t.name}</div>
        <div class="ctrls">
          <div class="pill soft p2">${btn("dot", "Aufnahme")}${btn("spk", "Monitor")}</div>
          <div class="pill soft ${t.extra === "keys" ? "p2" : "p3"}">${t.extra === "midi"
            ? html`${btn("grid", "Kanal")}<span class="num2">2</span>`
            : html`${btn("e", "Kanal bearbeiten", t.id === "audio2" ? "blue" : "")}${btn(t.extra!, "Format")}`}</div>
          <div class="pill soft p2">${btn("r", "Automation lesen")}${btn("w", "Automation schreiben")}</div>
          <div class="pill p1">${btn("lanes", "Spuren anzeigen")}</div>
        </div></div></div>`;
  }

  private clip(col: string, dark = false) {
    const c = dark ? "#d9744a" : "#8a3318";
    return html`<div class="ev clip ${col} ${dark ? "dark" : ""}"><svg viewBox="0 0 50 50" preserveAspectRatio="none">
      <path d="M1 11.500h20l8 1h20v1H29l-8 1H7l-6 1zM1 35h20l8 1h20v1H29l-8 1H7l-6 1z" fill=${c} />
      <path d="M20 12.500h29M20 36.500h29" stroke=${dark ? c : "#4a1a0c"} stroke-width="1" />
      ${dark ? svg`<path d="M29 2v46" stroke="#bbb" stroke-width="1" stroke-dasharray="1 1"/><path d="M29 2 49 47" stroke="#f3e9e4" stroke-width="2"/>` : nothing}
    </svg></div>`;
  }

  private lane(t: Track) {
    let c: any = nothing;
    if (t.id === "halion") c = html`<div class="ev part s1">HALion&nbsp; So</div>`;
    if (t.id === "bass") c = html`${this.clip("s1")}${this.clip("s2")}${this.clip("s3", true)}${this.clip("s4")}`;
    if (t.id === "tempo") c = html`<div class="tempoline"></div>`;
    if (t.id === "chords") c = html`<div class="chordband"></div>`;
    if (t.id === "transpose")
      c = html`<div class="ev tr low s2">1</div><div class="ev tr low s3">2</div><div class="ev tr wide s4w">3</div><div class="ev tr high s13w">-4</div>`;
    return html`<div class="lane barsgrid ${t.kind === "folder" ? "" : "full"}">${c}</div>`;
  }

  private project() {
    return html`<section class="project">
      <div class="tracklist">
        <div class="tl-head">
          <div class="grp grey">${btn("plus", "Spur hinzufügen")}${btn("preset", "Spur-Presets")}</div>
          <div class="grp push"><span class="count">15 / 15</span>${btn("house", "Sichtbarkeit")}${btn("list", "Agenten")}</div>
          ${btn("search", "Suchen", "grey")}
        </div>
        ${TRACKS.map((t) => html`<div class="row ${t.id} ${t.kind} ${t.kind === "folder" ? "" : "full"} ${t.num ? "num" : ""}">
          <div class="color">${ico(t.icon)}<span>${t.num ?? ""}</span></div>${this.trackBody(t)}
        </div>`)}
        <div class="tl-foot">${combo("Standard", "Spurtyp")}${ico("gear", "sm")}</div>
      </div>
      <div class="arr">
        <div class="canvas">
          <div class="ruler barsgrid">${BARS.map((n) => html`<span class=${classMap({ loop: n < 5, first: n === 1, last: n === 4 })}>${n}</span>`)}</div>
          <div class="lines barsgrid">${BARS.map((n) => html`<i class=${n < 5 ? "loop" : ""}></i>`)}</div>
          <div class="lanes">${TRACKS.map((t) => this.lane(t))}</div>
          <div class="playhead"></div>
        </div>
        <div class="hscroll"><div class="track-line"><div class="thumb"></div></div>${ico("down", "xs")}<span>−</span><input class="range" type="range" value="30" aria-label="Horizontaler Zoom" /><span>+</span></div>
      </div>
      <div class="side">${btn("down", "Lineal")}<span class="slash">⁄</span>
        <input class="range v v1" type="range" value="100" aria-label="Wellenform-Zoom" />
        <div class="vline"></div>${ico("down", "xs")}<span>−</span>
        <input class="range v v3" type="range" value="12" aria-label="Vertikaler Zoom" /><span>+</span></div>
    </section>`;
  }

  private transport() {
    const dots = html`<span class="dots"></span>`;
    return html`<footer class="transport">
      ${btn("history", "Transport-Verlauf", "grey rounded")}
      <div class="grp w-punch"><span class="lead">${ico("dot", "md")}</span>${combo("Punch-In/Ou.", "Aufnahmemodus")}</div>${dots}
      <div class="grp w-hist"><span class="lead">${ico("audio")}</span>${combo("Verlauf speic.", "Audio-Aufnahmemodus")}</div>${dots}
      <div class="grp w-parts"><span class="lead">${ico("midi", "md")}</span>${combo("Neue Parts", "MIDI-Aufnahmemodus")}${combo("Mix", "Cycle-Modus")}</div>${dots}
      <button class="aq">AQ</button>
      <div class="grp play">${btn("prev", "Zurück", "half")}${btn("next", "Weiter", "half")}${btn("cycle", "Cycle", "cyc")}${btn("stop", "Stopp", "stp")}${btn("play", "Wiedergabe")}${btn("rec", "Aufnahme")}</div>${dots}
      <div class="grp w-tempo">${btn("tempo", "Tempospur", "on")}<input aria-label="Projekttempo" value="120.000" /><span class="spin">${ico("spin", "sm")}</span><button class="sig">4/4</button></div>${dots}
      <div class="grp w-metro push">${btn("metro", "Metronom", "grey")}${btn("count", "Vorzähler", "grey")}<span class="beats"><i class="up"></i><i></i><i></i><i></i></span>${btn("e", "Metronom einrichten", "grey")}</div>${dots}
      <div class="grp w-level"><i></i><i></i><label><input aria-label="Pegel" value="0.00" />${ico("left", "sm")}</label></div>${dots}
      ${btn("gear", "Transport einrichten", "box tall")}
    </footer>
    <div class="taskbar"><i></i></div>`;
  }

  private contextMenu() {
    return html`<div class="ctx" role="menu">
      <button class="sub"><span>Spur hinzufügen</span><span>›</span></button><hr />
      <button>Alle Events auswählen</button>
      <button><span>Ausgewählte Spuren entfernen</span><span>Umschalt + Entf</span></button>
      <button>Ausgewählte Spuren ausblenden</button>
      <button>Ausgewählte Spuren in neuen Ordner verschieben</button><hr />
      <button>Bilder in Spurliste einblenden</button><hr />
      <button>Events ohne Grundton wird Projekt-Grundton zugewiesen</button>
    </div>`;
  }

  render() {
    return html`${this.menubar()}${this.toolbar()}${this.status()}
      <main class="work">${this.inspector()}${this.project()}</main>
      ${this.transport()}${this.contextMenu()}
      <svg class="marks" viewBox="0 0 1280 720" fill="none" stroke-width="3" aria-hidden="true">
        <path d="M233 269h45v133h22L256 532 211 402h22z" stroke="#1f9ad1" />
        <path d="M587 293l30 68h-14v70h-31v-70h-14z" stroke="#b4e33c" />
        <path d="M974 120l28 112h-13v111h-29V232h-14z" stroke="#f2c53d" />
        <path d="M384 598v11l3-3 2 5 2-1-2-5h4z" fill="#fff" stroke="#222" stroke-width="1" />
      </svg>
      <p class="caption">Set Root Key for Unassigned Events</p>`;
  }
}
